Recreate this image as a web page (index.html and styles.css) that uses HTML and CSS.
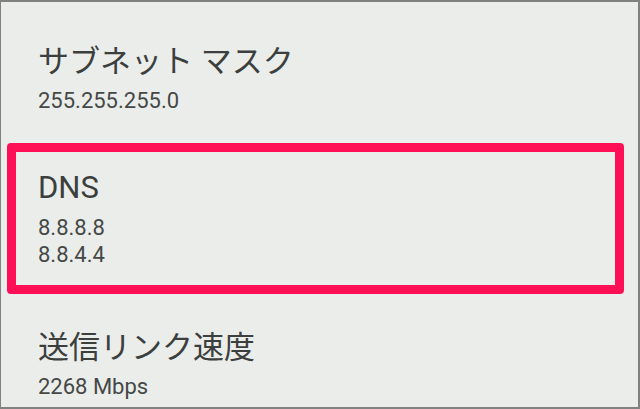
FILE: index.html
```html
<!DOCTYPE html>
<html lang="ja">
<head>
<meta charset="utf-8">
<title>ネットワークの詳細</title>
<link rel="stylesheet" href="styles.css">
</head>
<body>
<div class="frame">
  <div class="item item-first">
    <div class="title">サブネット マスク</div>
    <div class="value">255.255.255.0</div>
  </div>
  <div class="highlight">
    <div class="title">DNS</div>
    <div class="value">8.8.8.8</div>
    <div class="value value-next">8.8.4.4</div>
  </div>
  <div class="item item-last">
    <div class="title">送信リンク速度</div>
    <div class="value">2268 Mbps</div>
  </div>
</div>
</body>
</html>
```

FILE: styles.css
```css
html, body {
  margin: 0;
  padding: 0;
  background: #ebedea;
}

.frame {
  box-sizing: border-box;
  width: 640px;
  height: 409px;
  border-style: solid;
  border-color: #808281;
  border-width: 2px 2px 2px 1px;
  background: #ebedea;
  font-family: Roboto, "Noto Sans CJK JP", sans-serif;
  color: #3b3f3d;
  display: flex;
  flex-direction: column;
  overflow: hidden;
}

.item {
  padding-left: 37px;
}

.item-first {
  padding-top: 40px;
}

.item-last {
  margin-top: 34px;
}

.title {
  font-size: 31px;
  line-height: 40px;
  font-weight: 400;
  white-space: nowrap;
}

.value {
  font-size: 22px;
  line-height: 27px;
  margin-top: 5px;
  color: #444846;
}

.value-next {
  margin-top: 0;
}

.highlight {
  margin: 29px 14px 0 6px;
  border: 9px solid #ff0f55;
  border-radius: 4px;
  padding: 16px 0 17px 22px;
}

.highlight .value {
  margin-top: 6px;
}

.highlight .value-next {
  margin-top: 0;
}
```
